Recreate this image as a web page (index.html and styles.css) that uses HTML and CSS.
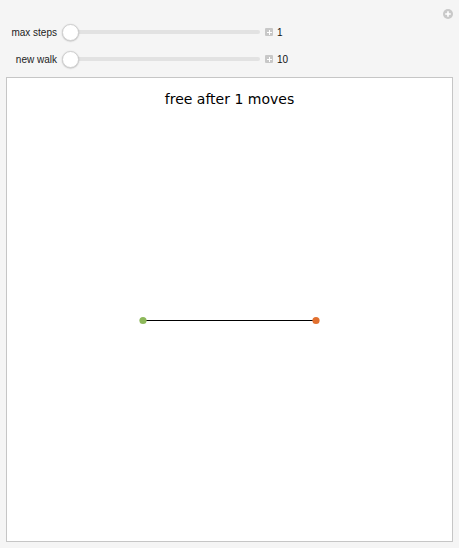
FILE: index.html
```html
<!DOCTYPE html>
<html>
<head>
<meta charset="utf-8">
<link rel="stylesheet" href="styles.css">
</head>
<body>
<div class="app">
  <svg class="corner" width="12" height="12" viewBox="0 0 12 12">
    <circle cx="6" cy="6" r="5" fill="#c9c9c9"/>
    <path d="M6 3.2v5.6M3.2 6h5.6" stroke="#fff" stroke-width="1.6"/>
  </svg>
  <div class="controls">
    <div class="row">
      <span class="label">max steps</span>
      <div class="slider"><div class="track"></div><div class="thumb"></div></div>
      <span class="plus"></span>
      <span class="value">1</span>
    </div>
    <div class="row">
      <span class="label">new walk</span>
      <div class="slider"><div class="track"></div><div class="thumb"></div></div>
      <span class="plus"></span>
      <span class="value">10</span>
    </div>
  </div>
  <div class="panel">
    <div class="title">free after 1 moves</div>
    <svg class="plot" width="445" height="432" viewBox="0 0 445 432">
      <line x1="136" y1="212.5" x2="309" y2="212.5" stroke="#000" stroke-width="1.1"/>
      <circle cx="136" cy="212.5" r="3.6" fill="#8db85a"/>
      <circle cx="309" cy="212.5" r="3.6" fill="#e2702f"/>
    </svg>
  </div>
</div>
</body>
</html>
```
FILE: styles.css
```css
html, body {
  margin: 0;
  padding: 0;
  background: #f5f5f5;
}
.app {
  position: relative;
  width: 459px;
  height: 548px;
  box-sizing: border-box;
  padding: 24px 6px 0 6px;
  font-family: "Liberation Sans", Arial, sans-serif;
}
.corner {
  position: absolute;
  left: 442px;
  top: 8px;
}
.controls {
  display: flex;
  flex-direction: column;
  gap: 11px;
  height: 53px;
}
.row {
  display: flex;
  align-items: center;
  height: 16px;
}
.label {
  width: 51px;
  text-align: right;
  font-size: 10px;
  color: #222;
}
.slider {
  position: relative;
  width: 198px;
  height: 16px;
  margin-left: 5px;
}
.track {
  position: absolute;
  left: 4px;
  right: 0;
  top: 6px;
  height: 4px;
  border-radius: 2px;
  background: #e2e2e2;
}
.thumb {
  position: absolute;
  left: 0;
  top: 0;
  width: 15px;
  height: 15px;
  border-radius: 50%;
  background: #fff;
  border: 0.5px solid #d0d0d0;
  box-shadow: 0 0.5px 1.5px rgba(0,0,0,0.25);
}
.plus {
  position: relative;
  width: 8px;
  height: 8px;
  margin-left: 5px;
  background: #c8c8c8;
  border-radius: 1px;
}
.plus::before, .plus::after {
  content: "";
  position: absolute;
  background: #fff;
}
.plus::before {
  left: 1.5px; right: 1.5px; top: 3.5px; height: 1px;
}
.plus::after {
  top: 1.5px; bottom: 1.5px; left: 3.5px; width: 1px;
}
.value {
  margin-left: 4px;
  font-size: 10px;
  color: #111;
}
.panel {
  width: 447px;
  height: 465px;
  box-sizing: border-box;
  border: 1px solid #c6c6c6;
  background: #fff;
  display: flex;
  flex-direction: column;
}
.title {
  margin-top: 13px;
  text-align: center;
  font-family: "DejaVu Sans", Verdana, sans-serif;
  font-size: 14px;
  line-height: 17px;
  color: #000;
}
.plot {
  display: block;
}
```
